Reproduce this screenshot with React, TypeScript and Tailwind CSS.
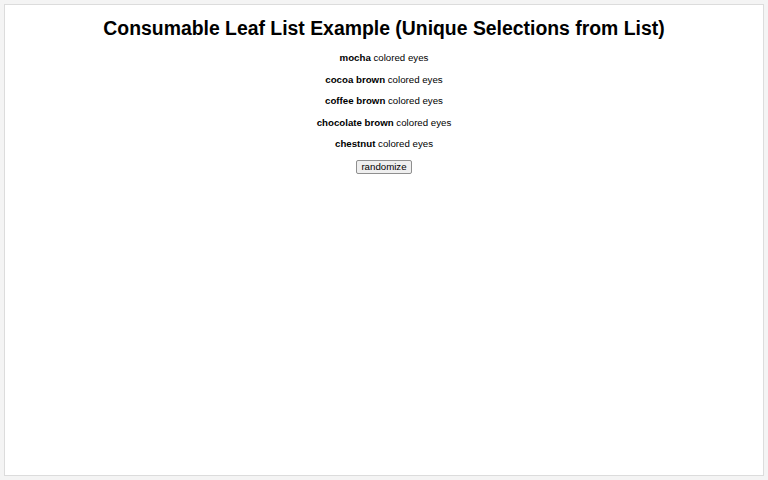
export default function App() {
  const items = ["mocha", "cocoa brown", "coffee brown", "chocolate brown", "chestnut"];
  return (
    <div className="h-[480px] w-[768px] bg-[#f4f4f4] p-[4px] font-['Liberation_Sans',Arial,sans-serif] text-black">
      <div className="h-[472px] border border-[#dcdcdc] bg-white text-center">
        <h1 className="mt-[10px] text-[19.4px] font-bold leading-[26px]">
          Consumable Leaf List Example (Unique Selections from List)
        </h1>
        <div className="mt-[10px] flex flex-col items-center gap-[8.5px] text-[9.7px] leading-[13px]">
          {items.map((c) => (
            <p key={c}>
              <b>{c}</b> colored eyes
            </p>
          ))}
          <button className="mt-[1px] rounded-[2px] border border-[#8f8f8f] bg-[#efefef] px-[4px] text-[9.7px] leading-[12px]">
            randomize
          </button>
        </div>
      </div>
    </div>
  );
}
